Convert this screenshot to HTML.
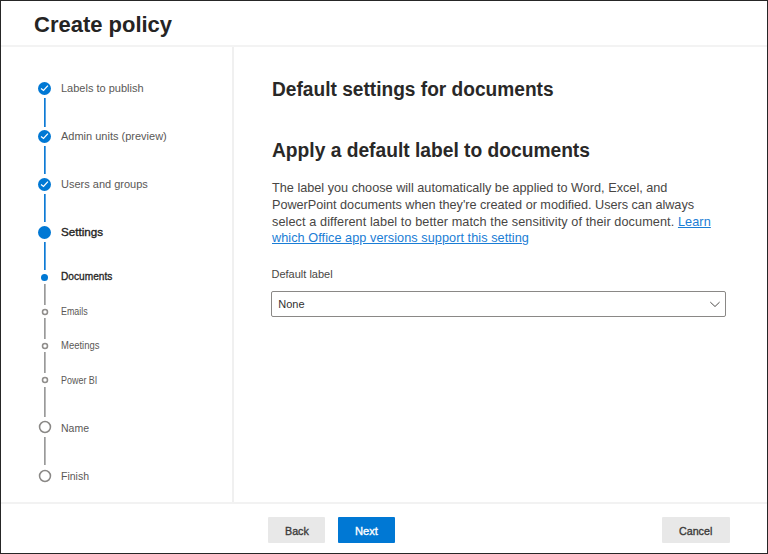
<!DOCTYPE html>
<html><head><meta charset="utf-8">
<style>
html,body{margin:0;padding:0;background:#fff;}
body{width:768px;height:554px;position:relative;overflow:hidden;font-family:"Liberation Sans",sans-serif;color:#323130;}
.a{position:absolute;white-space:nowrap;line-height:1;}
.frame{position:absolute;left:0;top:0;width:768px;height:554px;box-sizing:border-box;border:1px solid #262626;pointer-events:none;}
.hl{position:absolute;background:#ecebea;}
.ln{position:absolute;left:44px;width:2px;}
.b{background:linear-gradient(to right,#0d7bd5 50%,#5aa3e2 50%);}
.g{background:linear-gradient(to right,#9a9a9a 50%,#b9b9b9 50%);}
.chk{position:absolute;width:13px;height:13px;border-radius:50%;background:#0078d4;}
.ring{position:absolute;box-sizing:border-box;border-radius:50%;border:1.5px solid #8a8886;background:#fff;}
.nav{color:#5a5856;font-size:11px;}
.bt{top:525.8px;font-size:11.5px;font-weight:normal;-webkit-text-stroke:0.35px currentColor;transform:scaleX(0.93);transform-origin:0 0;}
.sc{transform-origin:0 0;}
.sm{width:7px;height:7px;border-width:1.9px;border-color:#7d7b79;}
.ab{position:absolute;}
.btn{position:absolute;top:517px;height:26px;border-radius:1px;}
</style></head><body>

<div class="a" style="left:34px;top:14px;font-size:22.5px;font-weight:bold;color:#252423;transform:scaleX(0.977);transform-origin:0 0;">Create policy</div>
<div class="hl" style="left:1px;top:45px;width:766px;height:2px;background:#f3f3f3;"></div>
<div class="hl" style="left:232px;top:47px;width:2px;height:455px;background:#f0f0f0;"></div>
<div class="hl" style="left:1px;top:502px;width:766px;height:2px;background:#f2f2f2;"></div>

<!-- nav lines -->
<div class="ln b" style="top:98px;height:29px;"></div>
<div class="ln b" style="top:146px;height:28px;"></div>
<div class="ln b" style="top:194px;height:28px;"></div>
<div class="ln b" style="top:242px;height:28px;"></div>
<div class="ln g" style="top:284px;height:21px;"></div>
<div class="ln g" style="top:318px;height:21px;"></div>
<div class="ln g" style="top:352px;height:21px;"></div>
<div class="ln g" style="top:387px;height:30px;"></div>
<div class="ln g" style="top:437px;height:28px;"></div>

<!-- nav circles -->
<div class="chk" style="left:38.2px;top:81.5px;"><svg style="display:block" width="13" height="13" viewBox="0 0 13 13"><path d="M3.0 6.5 L5.5 8.5 L9.9 3.6" fill="none" stroke="#fff" stroke-width="1.25"/></svg></div>
<div class="chk" style="left:38.2px;top:129.5px;"><svg style="display:block" width="13" height="13" viewBox="0 0 13 13"><path d="M3.0 6.5 L5.5 8.5 L9.9 3.6" fill="none" stroke="#fff" stroke-width="1.25"/></svg></div>
<div class="chk" style="left:38.2px;top:177.5px;"><svg style="display:block" width="13" height="13" viewBox="0 0 13 13"><path d="M3.0 6.5 L5.5 8.5 L9.9 3.6" fill="none" stroke="#fff" stroke-width="1.25"/></svg></div>
<div class="chk" style="left:38.2px;top:225.5px;"></div>
<div class="chk" style="left:41.2px;top:274px;width:7px;height:7px;"></div>
<svg class="ab" style="left:37.7px;top:304.7px" width="14" height="14" viewBox="0 0 14 14"><circle cx="7" cy="7" r="2.5" fill="none" stroke="#8f8d8b" stroke-width="1.55"/></svg>
<svg class="ab" style="left:37.7px;top:339.1px" width="14" height="14" viewBox="0 0 14 14"><circle cx="7" cy="7" r="2.5" fill="none" stroke="#8f8d8b" stroke-width="1.55"/></svg>
<svg class="ab" style="left:37.7px;top:373.4px" width="14" height="14" viewBox="0 0 14 14"><circle cx="7" cy="7" r="2.5" fill="none" stroke="#8f8d8b" stroke-width="1.55"/></svg>
<svg class="ab" style="left:37.8px;top:420.1px" width="14" height="14" viewBox="0 0 14 14"><circle cx="7" cy="7" r="5.45" fill="none" stroke="#8a8886" stroke-width="1.55"/></svg>
<svg class="ab" style="left:37.8px;top:468.6px" width="14" height="14" viewBox="0 0 14 14"><circle cx="7" cy="7" r="5.45" fill="none" stroke="#8a8886" stroke-width="1.55"/></svg>

<!-- nav labels -->
<div class="a nav" style="left:61px;top:82.6px;">Labels to publish</div>
<div class="a nav" style="left:61px;top:130.6px;">Admin units (preview)</div>
<div class="a nav" style="left:61px;top:178.6px;">Users and groups</div>
<div class="a nav sc" style="left:61px;top:227.2px;font-weight:normal;-webkit-text-stroke:0.35px currentColor;color:#252423;font-size:11.2px;transform:scaleX(1.04);">Settings</div>
<div class="a nav sc" style="left:61px;top:272.1px;font-weight:normal;-webkit-text-stroke:0.3px currentColor;color:#252423;font-size:10.3px;transform:scaleX(0.985);">Documents</div>
<div class="a nav sc" style="left:61px;top:305.8px;font-size:10.6px;transform:scaleX(0.84);">Emails</div>
<div class="a nav sc" style="left:61px;top:340.2px;font-size:10.6px;transform:scaleX(0.895);">Meetings</div>
<div class="a nav sc" style="left:61px;top:374.5px;font-size:10.6px;transform:scaleX(0.845);">Power BI</div>
<div class="a nav" style="left:61px;top:422.8px;font-size:10.5px;">Name</div>
<div class="a nav" style="left:61px;top:470.8px;font-size:10.5px;">Finish</div>

<!-- content -->
<div class="a sc" style="left:272px;top:80.2px;font-size:19.6px;font-weight:bold;color:#292827;transform:scaleX(0.976);">Default settings for documents</div>
<div class="a sc" style="left:271.5px;top:140.8px;font-size:19.6px;font-weight:bold;color:#292827;transform:scaleX(0.98);">Apply a default label to documents</div>

<div class="a" style="left:272px;top:182.4px;font-size:12.7px;color:#484644;">The label you choose will automatically be applied to Word, Excel, and</div>
<div class="a" style="left:272px;top:198.9px;font-size:12.7px;letter-spacing:-0.03px;color:#484644;">PowerPoint documents when they're created or modified. Users can always</div>
<div class="a" style="left:272px;top:215.7px;font-size:12.7px;letter-spacing:0.083px;color:#484644;">select a different label to better match the sensitivity of their document. <span style="color:#1a7dd5;text-decoration:underline;">Learn</span></div>
<div class="a" style="left:272px;top:232.4px;font-size:12.7px;letter-spacing:0.056px;color:#1a7dd5;text-decoration:underline;">which Office app versions support this setting</div>

<div class="a" style="left:271.5px;top:268.5px;font-size:11px;color:#484644;">Default label</div>
<div style="position:absolute;left:271px;top:291px;width:455px;height:26px;box-sizing:border-box;border:1px solid #8a8886;border-radius:2px;"></div>
<div class="a" style="left:278.3px;top:298.5px;font-size:11px;color:#323130;">None</div>
<svg style="position:absolute;left:709px;top:300px;" width="12" height="8" viewBox="0 0 12 8"><path d="M1.3 2.1 L6.0 6.5 L10.6 2.1" fill="none" stroke="#4f4d4b" stroke-width="1"/></svg>

<!-- footer buttons -->
<div class="btn" style="left:268px;width:57px;background:#e8e8e8;"></div>
<div class="btn" style="left:337.5px;width:57.5px;background:#0078d4;"></div>
<div class="btn" style="left:662px;width:68px;background:#e8e8e8;"></div>
<div class="a bt" style="left:285px;color:#3b3a39;">Back</div>
<div class="a bt" style="left:354.5px;color:#fff;transform:scaleX(0.97);">Next</div>
<div class="a bt" style="left:679.3px;color:#3b3a39;">Cancel</div>
<div class="frame"></div>
</body></html>
